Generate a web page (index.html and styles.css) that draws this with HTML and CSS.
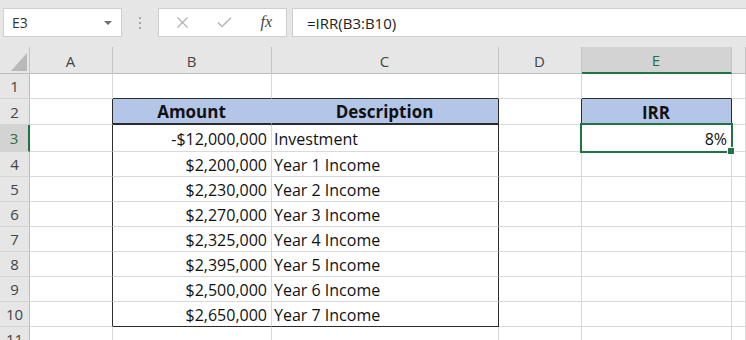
FILE: index.html
```html
<!DOCTYPE html>
<html lang="en">
<head>
    <meta charset="UTF-8">
    <meta name="viewport" content="width=device-width, initial-scale=1.0">
    <title>IRR - Sheet1</title>
    <link rel="stylesheet" href="styles.css">
</head>
<body>

<div class="toolbar">
    <div class="namebox">
        <span>E3</span>
        <span class="caret"></span>
    </div>
    <div class="grip"><i></i><i></i><i></i></div>
    <div class="fbtns">
        <svg width="13" height="11" viewBox="0 0 13 11"><path d="M1.5 0.5 L11.5 10.5 M11.5 0.5 L1.5 10.5" stroke="#b5b5b5" stroke-width="1.4" fill="none"/></svg>
        <svg width="15" height="11" viewBox="0 0 15 11"><path d="M1 5.5 L5 9.5 L14 0.8" stroke="#b5b5b5" stroke-width="1.5" fill="none"/></svg>
        <span class="fx">fx</span>
    </div>
    <div class="formula">=IRR(B3:B10)</div>
</div>

<div class="sheet">
    <div class="row head">
        <div class="corner"><svg width="16" height="18" viewBox="0 0 16 18"><path d="M16 0 L16 18 L0 18 Z" fill="#b9b9b9"/></svg></div>
        <div class="col">A</div>
        <div class="col">B</div>
        <div class="col">C</div>
        <div class="col">D</div>
        <div class="col sel">E</div>
        <div class="col"></div>
    </div>
    <div class="row">
        <div class="rh">1</div>
        <div></div>
        <div class="edge-b"></div>
        <div class="edge-b"></div>
        <div></div>
        <div class="edge-b"></div>
        <div></div>
    </div>
    <div class="row r2">
        <div class="rh">2</div>
        <div class="edge-r"></div>
        <div class="hdr joined">Amount</div>
        <div class="hdr edge-r">Description</div>
        <div class="edge-r"></div>
        <div class="hdr-e">IRR</div>
        <div></div>
    </div>
    <div class="row r3">
        <div class="rh on">3</div>
        <div class="edge-r"></div>
        <div class="num">-$12,000,000</div>
        <div class="edge-r">Investment</div>
        <div></div>
        <div class="num active">8%</div>
        <div></div>
    </div>
    <div class="row">
        <div class="rh">4</div>
        <div class="edge-r"></div>
        <div class="num">$2,200,000</div>
        <div class="edge-r">Year 1 Income</div>
        <div></div><div></div><div></div>
    </div>
    <div class="row">
        <div class="rh">5</div>
        <div class="edge-r"></div>
        <div class="num">$2,230,000</div>
        <div class="edge-r">Year 2 Income</div>
        <div></div><div></div><div></div>
    </div>
    <div class="row">
        <div class="rh">6</div>
        <div class="edge-r"></div>
        <div class="num">$2,270,000</div>
        <div class="edge-r">Year 3 Income</div>
        <div></div><div></div><div></div>
    </div>
    <div class="row">
        <div class="rh">7</div>
        <div class="edge-r"></div>
        <div class="num">$2,325,000</div>
        <div class="edge-r">Year 4 Income</div>
        <div></div><div></div><div></div>
    </div>
    <div class="row">
        <div class="rh">8</div>
        <div class="edge-r"></div>
        <div class="num">$2,395,000</div>
        <div class="edge-r">Year 5 Income</div>
        <div></div><div></div><div></div>
    </div>
    <div class="row">
        <div class="rh">9</div>
        <div class="edge-r"></div>
        <div class="num">$2,500,000</div>
        <div class="edge-r">Year 6 Income</div>
        <div></div><div></div><div></div>
    </div>
    <div class="row">
        <div class="rh">10</div>
        <div class="edge-r"></div>
        <div class="num edge-b">$2,650,000</div>
        <div class="edge-r edge-b">Year 7 Income</div>
        <div></div><div></div><div></div>
    </div>
    <div class="row">
        <div class="rh">11</div>
        <div></div><div></div><div></div><div></div><div></div><div></div>
    </div>
</div>

</body>
</html>
```

FILE: styles.css
```css
body {
    margin: 0;
    padding: 0;
    background: #ffffff;
    font-family: 'Open Sans', 'Liberation Sans', sans-serif;
    color: #111;
    overflow: hidden;
}

/* formula bar strip */
.toolbar {
    height: 47px;
    box-sizing: border-box;
    padding: 8px 0 0 3px;
    background: #e6e6e6;
    display: flex;
    align-items: flex-start;
}
.namebox, .fbtns, .formula {
    height: 29px;
    box-sizing: border-box;
    background: #fff;
    border: 1px solid #cfcfcf;
    display: flex;
    align-items: center;
}
.namebox {
    width: 119px;
    padding: 0 9px 0 8px;
    justify-content: space-between;
    font-size: 14px;
    color: #333;
}
.caret {
    width: 0;
    height: 0;
    border-left: 4px solid transparent;
    border-right: 4px solid transparent;
    border-top: 4px solid #6f6f6f;
}
.grip {
    width: 36px;
    display: flex;
    flex-direction: column;
    align-items: center;
    gap: 3px;
    padding-top: 9px;
}
.grip i {
    width: 2px;
    height: 2px;
    background: #a8a8a8;
}
.fbtns {
    width: 129px;
    padding: 0 14px 0 17px;
    justify-content: space-between;
}
.fx {
    font-family: 'Liberation Serif', serif;
    font-style: italic;
    font-size: 16px;
    color: #444;
    padding-bottom: 2px;
}
.formula {
    flex: 1;
    margin-left: 5px;
    border-right: none;
    padding-left: 14px;
    font-size: 15px;
    color: #222;
}

/* grid */
.row {
    display: grid;
    grid-template-columns: 30px 83px 159px 227px 83px 150px 1fr;
    height: 25px;
}
.row.head { height: 27px; }
.row.r2 { height: 26px; }
.row.r3 { height: 27px; }
.row > div {
    box-sizing: border-box;
    border-right: 1px solid #d9d9d9;
    border-bottom: 1px solid #d9d9d9;
    display: flex;
    align-items: center;
    padding: 1px 3px 0 2px;
    white-space: nowrap;
    font-size: 16px;
}

.head > div {
    background: #e6e6e6;
    border-right-color: #c4c4c4;
    border-bottom-color: #bdbdbd;
    justify-content: center;
    font-size: 15px;
    color: #444;
}
.head .corner {
    justify-content: flex-end;
    align-items: flex-end;
    padding: 0 2px 2px 0;
}
.head .sel {
    background: #d3d3d3;
    border-bottom: 2px solid #217346;
    color: #217346;
}
.row > .rh {
    background: #e6e6e6;
    border-right-color: #bdbdbd;
    border-bottom-color: #d4d4d4;
    justify-content: center;
    font-size: 15px;
    color: #444;
    padding: 0;
}
.row > .rh.on {
    background: #d3d3d3;
    border-right: 2px solid #217346;
    color: #217346;
}

/* table borders */
.row > .edge-r { border-right-color: #2b2b2b; }
.row > .edge-b { border-bottom-color: #2b2b2b; }
.row > .hdr, .row > .hdr-e {
    background: #b4c6e7;
    font-weight: bold;
    font-size: 17px;
    justify-content: center;
    color: #111;
}
.row > .hdr { border-bottom: 2px solid #2b2b2b; }
.row > .hdr.joined { border-right-color: #b4c6e7; }
.row > .hdr-e {
    border-right-color: #2b2b2b;
    border-bottom-color: #2b2b2b;
}
.num {
    justify-content: flex-end;
}
.row > .num { padding-right: 4px; }

/* active cell */
.active {
    position: relative;
}
.active::after {
    content: '';
    position: absolute;
    left: -2px;
    top: -2px;
    right: -2px;
    bottom: -2px;
    border: 2px solid #217346;
}
.active::before {
    content: '';
    position: absolute;
    right: -4px;
    bottom: -4px;
    width: 6px;
    height: 6px;
    background: #217346;
    border: 1px solid #fff;
    z-index: 2;
}
```
